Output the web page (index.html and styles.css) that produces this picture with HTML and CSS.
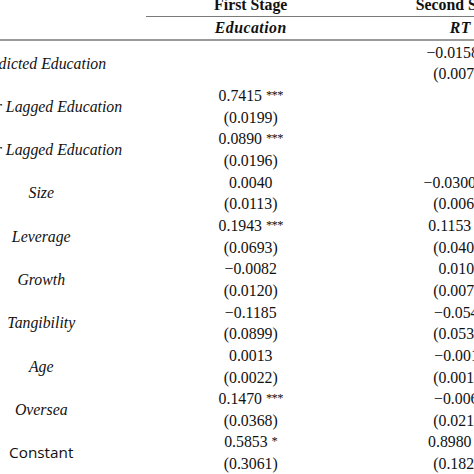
FILE: index.html
```html
<!DOCTYPE html>
<html>
<head>
<meta charset="utf-8">
<link rel="stylesheet" href="styles.css">
</head>
<body>
<table class="reg">
  <thead>
    <tr class="row-stage">
      <th class="lab"></th>
      <th class="stage">First Stage</th>
      <th class="stage">Second Stage</th>
    </tr>
    <tr class="row-dep">
      <th class="lab"></th>
      <th class="dep">Education</th>
      <th class="dep">RT</th>
    </tr>
  </thead>
  <tbody>
    <tr class="first">
      <td class="lab">Predicted Education</td>
      <td class="val"></td>
      <td class="val"><div>−0.0158 <span class="sig">**</span></div><div>(0.0072)</div></td>
    </tr>
    <tr>
      <td class="lab">1-Year Lagged Education</td>
      <td class="val"><div>0.7415 <span class="sig">***</span></div><div>(0.0199)</div></td>
      <td class="val"></td>
    </tr>
    <tr>
      <td class="lab">2-Year Lagged Education</td>
      <td class="val"><div>0.0890 <span class="sig">***</span></div><div>(0.0196)</div></td>
      <td class="val"></td>
    </tr>
    <tr>
      <td class="lab">Size</td>
      <td class="val"><div>0.0040</div><div>(0.0113)</div></td>
      <td class="val"><div>−0.0300 <span class="sig">***</span></div><div>(0.0066)</div></td>
    </tr>
    <tr>
      <td class="lab">Leverage</td>
      <td class="val"><div>0.1943 <span class="sig">***</span></div><div>(0.0693)</div></td>
      <td class="val"><div>0.1153 <span class="sig">***</span></div><div>(0.0404)</div></td>
    </tr>
    <tr>
      <td class="lab">Growth</td>
      <td class="val"><div>−0.0082</div><div>(0.0120)</div></td>
      <td class="val"><div>0.0101</div><div>(0.0072)</div></td>
    </tr>
    <tr>
      <td class="lab">Tangibility</td>
      <td class="val"><div>−0.1185</div><div>(0.0899)</div></td>
      <td class="val"><div>−0.0544</div><div>(0.0531)</div></td>
    </tr>
    <tr>
      <td class="lab">Age</td>
      <td class="val"><div>0.0013</div><div>(0.0022)</div></td>
      <td class="val"><div>−0.0011</div><div>(0.0013)</div></td>
    </tr>
    <tr>
      <td class="lab">Oversea</td>
      <td class="val"><div>0.1470 <span class="sig">***</span></div><div>(0.0368)</div></td>
      <td class="val"><div>−0.0064</div><div>(0.0217)</div></td>
    </tr>
    <tr>
      <td class="lab plain">Constant</td>
      <td class="val"><div>0.5853 <span class="sig">*</span></div><div>(0.3061)</div></td>
      <td class="val"><div>0.8980 <span class="sig">***</span></div><div>(0.1825)</div></td>
    </tr>
  </tbody>
</table>
</body>
</html>
```

FILE: styles.css
```css
html, body {
  margin: 0;
  padding: 0;
  background: #ffffff;
  overflow: hidden;
}

.reg {
  border-collapse: separate;
  border-spacing: 0;
  margin-top: -5.65px;
  margin-left: -63.5px;
  font-family: "Liberation Serif", "DejaVu Serif", serif;
  font-size: 15.8px;
  line-height: 21.65px;
  color: #111111;
  table-layout: fixed;
  width: 628.5px;
}

.reg th,
.reg td {
  padding: 0;
  width: 209.5px;
  text-align: center;
  vertical-align: middle;
  white-space: nowrap;
}

.stage {
  font-weight: bold;
  border-bottom: 1px solid #7a7a7a;
}

.row-dep th {
  border-bottom: 2px solid #9a9a9a;
}

.dep {
  font-weight: bold;
  font-style: italic;
  letter-spacing: 0.5px;
}

.first td {
  padding-top: 1px;
}

.lab {
  font-style: italic;
}

.lab.plain {
  font-style: normal;
  font-family: "Open Sans", "DejaVu Sans", sans-serif;
  font-size: 15.3px;
}

.sig {
  font-size: 12.5px;
  letter-spacing: -0.6px;
  vertical-align: 2px;
}
```
